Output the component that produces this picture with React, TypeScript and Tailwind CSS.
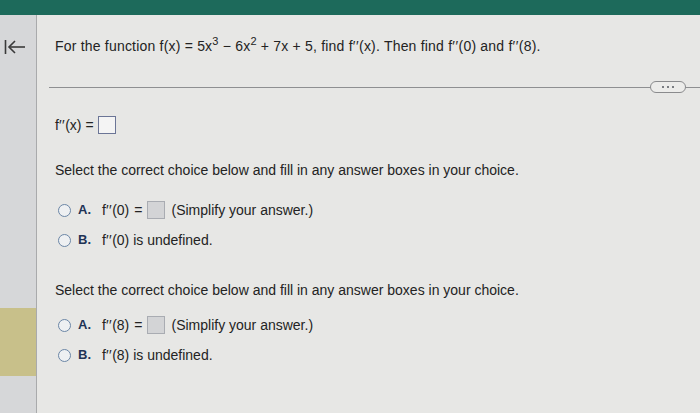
import React from 'react';

const font = { fontFamily: '"Liberation Sans", Arial, sans-serif' };

function Radio() {
  return <span className="inline-block w-[13px] h-[13px] rounded-full border-[1.5px] border-[#6b86a6] bg-[#eef0f2]" />;
}

function Box({ filled }: { filled?: boolean }) {
  return (
    <span
      className={
        filled
          ? 'inline-block w-[18px] h-[18px] border border-[#a9acb2] bg-[#d3d4d6] align-middle'
          : 'inline-block w-[18px] h-[18px] border border-[#6b7596] bg-[#f4f4f4] align-middle'
      }
    />
  );
}

function FPP({ arg }: { arg: string }) {
  return <span>f<span className="tracking-[0.5px]">′′</span>({arg})</span>;
}

function Choice({ letter, children }: { letter: string; children: React.ReactNode }) {
  return (
    <div className="flex items-center h-[22px]">
      <Radio />
      <span className="ml-[7px] w-[24px] font-bold text-[#1f3355] text-[13px]">{letter}.</span>
      <div className="flex items-center gap-[5px] text-[14px]">{children}</div>
    </div>
  );
}

export default function App() {
  return (
    <div className="w-[700px] h-[413px] flex flex-col bg-[#e7e7e5] text-[#232323]" style={font}>
      <div className="h-[15px] bg-[#1d6a5b]" />
      <div className="flex-1 flex">
        {/* colonne gauche */}
        <div className="w-[37px] bg-[#d6d7d9] border-r border-[#a9aaac] flex flex-col">
          <svg className="ml-[4px] mt-[24px]" width="22" height="16" viewBox="0 0 22 16" fill="none" stroke="#3a3a3a" strokeWidth="1.6">
            <path d="M1.5 1v14" />
            <path d="M5 8h16" />
            <path d="M11 2L5 8l6 6" />
          </svg>
          <div className="mt-[253px] h-[68px] bg-[#c8c08a]" />
        </div>

        {/* contenu */}
        <div className="flex-1 flex flex-col pt-[22px]">
          <div className="pl-[18px] text-[14px] tracking-[0.2px] h-[18px] flex items-center whitespace-nowrap">
            <span>
              For the function f(x) = 5x<sup className="text-[11px]">3</sup> − 6x<sup className="text-[11px]">2</sup> + 7x + 5, find <FPP arg="x" />. Then find <FPP arg="0" /> and <FPP arg="8" />.
            </span>
          </div>

          <div className="mt-[26px] ml-[12px] relative h-[12px] flex items-center">
            <div className="flex-1 h-px bg-[#8e8f91]" />
            <div className="absolute right-[14px] top-[0px] w-[36px] h-[12px] rounded-full border border-[#8a8b8d] bg-[#ececea] flex items-center justify-center gap-[3px]">
              <span className="w-[2px] h-[2px] bg-[#55595f] rounded-full" />
              <span className="w-[2px] h-[2px] bg-[#55595f] rounded-full" />
              <span className="w-[2px] h-[2px] bg-[#55595f] rounded-full" />
            </div>
          </div>

          <div className="pl-[18px] mt-[22px] flex items-center gap-[4px] text-[14px] h-[20px]">
            <FPP arg="x" /> = <Box />
          </div>

          <div className="pl-[18px] mt-[25px] text-[14px]">
            Select the correct choice below and fill in any answer boxes in your choice.
          </div>

          <div className="pl-[21px] mt-[18px] flex flex-col gap-[8px]">
            <Choice letter="A">
              <FPP arg="0" /> = <Box filled /> <span className="ml-[1px]">(Simplify your answer.)</span>
            </Choice>
            <Choice letter="B">
              <span><FPP arg="0" /> is undefined.</span>
            </Choice>
          </div>

          <div className="pl-[18px] mt-[29px] text-[14px]">
            Select the correct choice below and fill in any answer boxes in your choice.
          </div>

          <div className="pl-[21px] mt-[13px] flex flex-col gap-[8px]">
            <Choice letter="A">
              <FPP arg="8" /> = <Box filled /> <span className="ml-[1px]">(Simplify your answer.)</span>
            </Choice>
            <Choice letter="B">
              <span><FPP arg="8" /> is undefined.</span>
            </Choice>
          </div>
        </div>
      </div>
    </div>
  );
}
